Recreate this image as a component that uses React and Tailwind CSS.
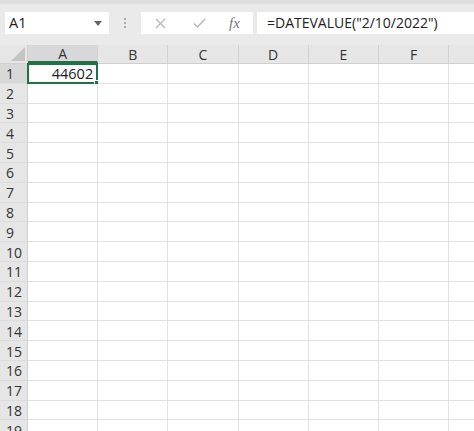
import React from 'react'

const cols = ['A', 'B', 'C', 'D', 'E', 'F', 'G']
const rows = Array.from({ length: 19 }, (_, i) => i + 1)
const font = { fontFamily: '"Open Sans", "Noto Sans", "Liberation Sans", sans-serif' }

function FormulaBar() {
  return (
    <div className="h-[45px] bg-[#eaeaea] border-t-[4px] border-[#dedede] flex pt-[8px]">
      {/* name box */}
      <div className="ml-[5px] w-[104px] h-[22px] bg-white flex items-center justify-between pl-[4px] pr-[7px]">
        <span className="text-[14.5px] text-[#222] leading-none">A1</span>
        <svg width="8" height="5" viewBox="0 0 8 5">
          <path d="M0 0 L8 0 L4 5 Z" fill="#666" />
        </svg>
      </div>
      <div className="w-[32px] h-[22px] flex flex-col items-center justify-center gap-[2px]">
        <span className="w-[2px] h-[2px] bg-[#aaa]" />
        <span className="w-[2px] h-[2px] bg-[#aaa]" />
        <span className="w-[2px] h-[2px] bg-[#aaa]" />
      </div>
      <div className="w-[112px] h-[22px] bg-white flex items-center">
        <svg className="ml-[14px]" width="11" height="11" viewBox="0 0 11 11">
          <path d="M1 1 L10 10 M10 1 L1 10" stroke="#b5b5b5" strokeWidth="1.2" />
        </svg>
        <svg className="ml-[27px]" width="13" height="10" viewBox="0 0 13 10">
          <path d="M1 5.5 L4.5 9 L12 1" stroke="#b5b5b5" strokeWidth="1.3" fill="none" />
        </svg>
        <span
          className="ml-[23px] text-[15px] italic text-[#777] leading-none"
          style={{ fontFamily: '"Liberation Serif", serif' }}
        >
          fx
        </span>
      </div>
      <div className="ml-[4px] flex-1 h-[22px] bg-white flex items-center pl-[10px]">
        <span className="text-[14px] text-[#222] leading-none">=DATEVALUE("2/10/2022")</span>
      </div>
    </div>
  )
}

function HeaderRow() {
  return (
    <div className="flex h-[19px] bg-[#e6e6e6] border-b border-[#cfcfcf]">
      <div className="w-[28px] shrink-0 relative border-r border-[#cfcfcf]">
        <svg className="absolute right-[2px] bottom-[2px]" width="14" height="14" viewBox="0 0 14 14">
          <path d="M14 0 L14 14 L0 14 Z" fill="#c4c4c4" />
        </svg>
      </div>
      {cols.map(c => (
        <div
          key={c}
          className={`w-[70.2px] shrink-0 flex items-center justify-center pt-[1px] text-[14px] text-[#333] border-r border-[#d2d2d2] ${
            c === 'A' ? 'bg-[#d8d8d8] border-b-2 border-b-[#217346]' : ''
          }`}
        >
          {c}
        </div>
      ))}
    </div>
  )
}

export default function App() {
  return (
    <div className="w-[474px] h-[431px] overflow-hidden bg-white" style={font}>
      <FormulaBar />
      <HeaderRow />
      {rows.map(r => (
        <div key={r} className="flex h-[19.8px]">
          <div
            className={`w-[28px] shrink-0 flex items-center pl-[6px] pt-[1px] text-[14px] text-[#333] border-r border-[#cfcfcf] border-b border-b-[#dcdcdc] ${
              r === 1 ? 'bg-[#d8d8d8]' : 'bg-[#e6e6e6]'
            }`}
          >
            {r}
          </div>
          {cols.map(c => (
            <div key={c} className="w-[70.2px] shrink-0 border-r border-b border-[#e2e2e2] relative">
              {r === 1 && c === 'A' && (
                <div className="absolute -left-[1px] -top-[1px] -right-[1px] -bottom-[1px] border-2 border-[#217346] flex items-center justify-end pr-[3px] pt-[1px] text-[14.5px] text-[#222]">
                  44602
                  <span className="absolute -right-[3px] -bottom-[3px] w-[5px] h-[5px] bg-[#217346] border border-white" />
                </div>
              )}
            </div>
          ))}
        </div>
      ))}
    </div>
  )
}
